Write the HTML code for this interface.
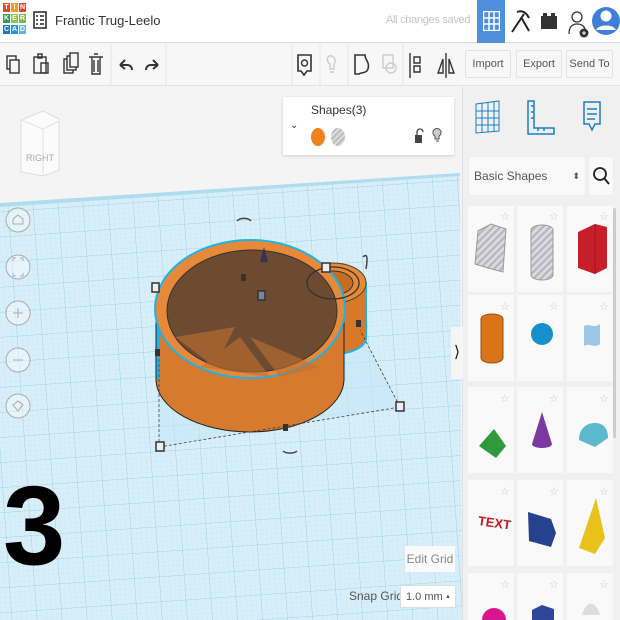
<!DOCTYPE html>
<html><head><meta charset="utf-8"><style>
*{margin:0;padding:0;box-sizing:border-box}
html,body{width:620px;height:620px;overflow:hidden}
body{background:#f4f4f4;font-family:"Liberation Sans",sans-serif;position:relative}
.abs{position:absolute}
.top{left:0;top:0;width:620px;height:43px;background:#fff;border-bottom:1px solid #dcdcdc}
.tb{left:0;top:44px;width:620px;height:42px;background:#f7f7f7;border-bottom:1px solid #e2e2e2}
.btn{position:absolute;top:50px;height:28px;border:1px solid #e3e3e3;background:#f7f7f7;font-size:11px;color:#555;text-align:center;line-height:27px;border-radius:2px}
.logo div{position:absolute;width:7px;height:9px;color:#fff;font-size:7px;font-weight:bold;text-align:center;line-height:9px}
.card{position:absolute;width:46px;height:86px;background:#f9f9f9}
.card.l{height:47px}
</style></head><body>
<div class="abs top"></div>
<div class="abs logo" style="left:3px;top:3px">
<div style="left:0;top:0;background:#e8432c">T</div><div style="left:8px;top:0;background:#f39c1f">I</div><div style="left:16px;top:0;background:#e8432c">N</div>
<div style="left:0;top:11px;background:#2a9e52">K</div><div style="left:8px;top:11px;background:#8cc63f">E</div><div style="left:16px;top:11px;background:#7ab648">R</div>
<div style="left:0;top:22px;background:#1a76c8">C</div><div style="left:8px;top:22px;background:#1a9ad6">A</div><div style="left:16px;top:22px;background:#5bb6e8">D</div>
</div>
<svg class="abs" style="left:33px;top:11px" width="14" height="18"><rect x="1" y="1" width="12" height="16" fill="none" stroke="#222" stroke-width="1.5"/><path d="M3 5h2M3 9h2M3 13h2M7 5h4M7 9h4M7 13h4" stroke="#222" stroke-width="1.5"/></svg>
<div class="abs" style="left:55px;top:13px;font-size:13px;color:#333">Frantic Trug-Leelo</div>
<div class="abs" style="left:386px;top:14px;font-size:11px;color:#c4c4c4;letter-spacing:-0.3px;white-space:nowrap">All changes saved</div>
<div class="abs" style="left:477px;top:0;width:28px;height:43px;background:#4f8fdc"></div>
<svg class="abs" style="left:483px;top:11px" width="17" height="20"><path d="M0.5 0.5h16v19h-16zM0.5 7h16M0.5 13h16M6 0.5v19M11 0.5v19" stroke="#fff" fill="none" stroke-width="1.5"/></svg>
<svg class="abs" style="left:509px;top:8px" width="22" height="26"><path d="M3 24L15 6M8 4c5-2 9 0 12 6M12 9l8 14" stroke="#222" stroke-width="2" fill="none"/></svg>
<svg class="abs" style="left:540px;top:12px" width="18" height="18"><rect x="1" y="4" width="16" height="13" fill="#333"/><rect x="3" y="1" width="4" height="4" fill="#333"/><rect x="11" y="1" width="4" height="4" fill="#333"/></svg>
<svg class="abs" style="left:567px;top:8px" width="24" height="30"><circle cx="10" cy="9" r="5" fill="none" stroke="#333" stroke-width="1.3"/><path d="M2 26c0-7 3-10 8-10s7 2 8 5" fill="none" stroke="#333" stroke-width="1.3"/><circle cx="17" cy="25" r="4.5" fill="#333"/><path d="M17 23v4M15 25h4" stroke="#fff"/></svg>
<svg class="abs" style="left:592px;top:1px" width="28" height="41"><rect width="28" height="41" fill="#fff"/><circle cx="14" cy="20" r="14" fill="#3f7fd8"/><circle cx="14" cy="15" r="5.5" fill="#fff"/><path d="M4 29c3-6 17-6 20 0" fill="#fff"/></svg>
<div class="abs tb"></div>
<svg class="abs" style="left:0;top:44px" width="460" height="42" fill="none" stroke="#333" stroke-width="1.4">
<rect x="7" y="12" width="9" height="13"/><rect x="10" y="16" width="9" height="13" fill="#f7f7f7"/>
<rect x="34" y="13" width="12" height="16"/><rect x="38" y="10" width="4" height="4"/><rect x="41" y="19" width="7" height="10"/>
<rect x="64" y="15" width="9" height="14"/><rect x="67" y="12" width="9" height="14" fill="#f7f7f7"/><rect x="70" y="9" width="8" height="14" fill="#f7f7f7"/>
<path d="M89 13h14M92 13v17h8v-17M94 10h4M94 16v12M98 16v12"/>
<path d="M120 21l5-5M120 21l5 4M120 21h7c3 0 5 2 5 5" stroke-width="2"/>
<path d="M158 21l-5-5M158 21l-5 4M158 21h-7c-3 0-5 2-5 5" stroke-width="2"/>
<path d="M111 0v42M166 0v42M292 0v42M320 0v42M348 0v42M403 0v42" stroke="#e4e4e4" stroke-width="1"/>
<path d="M298 11h13v16h-4l-3 4-3-4h-3z" stroke-width="1.6"/><circle cx="304.5" cy="19" r="3"/>
<path d="M329 12a5 5 0 0 1 5 8v5h-4v-5a5 5 0 0 1-1-8zM330 28h4" stroke="#ccc"/>
<path d="M355 11h10c0 5 5 7 3 14-2 5-7 3-9 5h-4z" stroke-width="1.6"/>
<rect x="383" y="11" width="10" height="13" stroke="#ccc"/><circle cx="391" cy="24" r="5" stroke="#ccc"/>
<path d="M410 9v25M414 13h6v6h-6zM414 22h6v6h-6z"/>
<path d="M446 9v25M443 15l-5 14h5zM449 15l5 14h-5z"/>
</svg>
<div class="btn" style="left:465px;width:46px">Import</div>
<div class="btn" style="left:516px;width:46px">Export</div>
<div class="btn" style="left:566px;width:47px">Send To</div>

<svg class="abs" style="left:0;top:87px" width="462" height="533">
<defs>
<pattern id="g" width="5" height="5" patternUnits="userSpaceOnUse" patternTransform="rotate(-4)"><path d="M5 0V5H0" fill="none" stroke="#bfe1f1" stroke-width="0.5"/></pattern>
<pattern id="G" width="25" height="25" patternUnits="userSpaceOnUse" patternTransform="rotate(-4)"><path d="M25 0V25H0" fill="none" stroke="#95cce8" stroke-width="0.8"/></pattern>
</defs>
<polygon points="0,116 460,86 462,533 0,533" fill="#d8eff9"/>
<polygon points="0,116 460,86 462,533 0,533" fill="url(#g)"/>
<polygon points="0,116 460,86 462,533 0,533" fill="url(#G)"/>
<polygon points="0,116 460,86 460,89 0,120" fill="#b0dcf0"/>
<polygon points="159,360 400,320 360,243 157,263" fill="#c5e6f6" opacity="0.6"/>
<path d="M300 196 h66 v55 a33 16 0 0 1 -66 0z" fill="#d8782a" stroke="#1ab4e8" stroke-width="2"/>
<ellipse cx="333" cy="196" rx="33" ry="20" fill="#e88a35" stroke="#444"/>
<ellipse cx="333" cy="196" rx="20" ry="12" fill="#c46e25" stroke="#333"/>
<path d="M156 222 v70 a94 53 0 0 0 188 0 v-70z" fill="#d57a2e" stroke="#222" stroke-width="1"/>
<path d="M158 222 v70" stroke="#1ab4e8" stroke-width="3"/>
<ellipse cx="250" cy="222" rx="95" ry="69" fill="#e8893a" stroke="#1ab4e8" stroke-width="2"/>
<ellipse cx="252" cy="224" rx="85" ry="61" fill="#6d4b30" stroke="#333"/>
<path d="M175 250 l60 -10 l-20 40z M200 280 l40 -30 l30 40z M280 290 l-30 -40 l70 30z" fill="#c27030" opacity="0.6"/>
<ellipse cx="333" cy="196" rx="26" ry="16" fill="none" stroke="#333" stroke-width="1.3"/>
<g fill="none" stroke="#444" stroke-width="0.8" stroke-dasharray="3 2"><path d="M159 360 L400 320 L360 243 M159 360 V263"/></g>
<g fill="#eee" stroke="#333" stroke-width="1.5"><rect x="152" y="196" width="7" height="9"/><rect x="322" y="176" width="8" height="9"/><rect x="156" y="355" width="8" height="9"/><rect x="396" y="315" width="8" height="9"/><rect x="258" y="204" width="7" height="9" fill="#789"/></g>
<g fill="#333"><rect x="155" y="262" width="5" height="7"/><rect x="283" y="337" width="5" height="7"/><rect x="356" y="233" width="5" height="7"/><rect x="241" y="187" width="5" height="7"/></g>
<path d="M237 134a8 5 0 0 1 14 0M283 364a8 4 0 0 0 14 0M363 170q6 -6 3 12" fill="none" stroke="#444" stroke-width="1.5"/>
<path d="M260 175 l4 -15 l4 15z" fill="#335"/>
</svg>
<svg class="abs" style="left:18px;top:105px" width="44" height="80"><path d="M3 15l22-9 16 8v51l-16 6-22-4z" fill="#fbfbfb" stroke="#ddd"/><path d="M3 15l22 9 16-8M25 24v47" stroke="#e2e2e2" fill="none"/><text x="8" y="56" font-size="9" fill="#aaa" font-family="Liberation Sans">RIGHT</text></svg>
<svg class="abs" style="left:4px;top:205px" width="30" height="220" fill="rgba(255,255,255,.4)" stroke="#aaa">
<circle cx="14" cy="15" r="12"/><circle cx="14" cy="62" r="12"/><circle cx="14" cy="108" r="12"/><circle cx="14" cy="155" r="12"/><circle cx="14" cy="201" r="12"/>
<path d="M9 19v-5l5-4 5 4v5z M9 56v-3h3M19 56v-3h-3M9 68v3h3M19 68v3h-3M9 108h10M14 103v10M9 155h10M14 196l5 4-5 6-5-6z" fill="none"/>
</svg>
<div class="abs" style="left:3px;top:470px;height:110px;font-size:112px;font-weight:bold;color:#000;line-height:1">3</div>
<div class="abs" style="left:405px;top:546px;width:50px;height:26px;background:#fafafa;font-size:12px;color:#888;line-height:26px;text-align:center;white-space:nowrap">Edit Grid</div>
<div class="abs" style="left:349px;top:589px;font-size:12px;color:#555;white-space:nowrap">Snap Grid</div>
<div class="abs" style="left:400px;top:585px;width:56px;height:23px;background:#fff;border:1px solid #ddd;font-size:11px;color:#555;line-height:22px;padding-left:5px;white-space:nowrap">1.0 mm<span style="position:absolute;right:4px;font-size:6px">▲</span></div>

<div class="abs" style="left:283px;top:97px;width:171px;height:58px;background:#fff;box-shadow:0 1px 3px rgba(0,0,0,.15)"></div>
<div class="abs" style="left:311px;top:103px;font-size:12px;color:#333">Shapes(3)</div>
<div class="abs" style="left:290px;top:120px;font-size:10px;color:#333">⌄</div>
<div class="abs" style="left:311px;top:128px;width:14px;height:18px;border-radius:50%;background:#f0821e"></div>
<svg class="abs" style="left:330px;top:128px" width="16" height="18"><defs><pattern id="s" width="4" height="4" patternUnits="userSpaceOnUse" patternTransform="rotate(45)"><rect width="2" height="4" fill="#bbb"/><rect x="2" width="2" height="4" fill="#ddd"/></pattern></defs><ellipse cx="8" cy="9" rx="7" ry="9" fill="url(#s)"/></svg>
<svg class="abs" style="left:414px;top:126px" width="30" height="20"><path d="M3 9v-3a3 3 0 0 1 6 0" fill="none" stroke="#444" stroke-width="1.3"/><rect x="1" y="9" width="7" height="8" fill="#444"/><path d="M21 3a4 4 0 0 1 4 7v3h-4v-3a4 4 0 0 1 0-7zM22 15h3" fill="#ccc" stroke="#555"/></svg>

<div class="abs" style="left:462px;top:87px;width:158px;height:533px;background:#f0f0f0;border-left:1px solid #e0e0e0"></div>
<div class="abs" style="left:451px;top:327px;width:12px;height:52px;background:#f5f5f5;font-size:16px;line-height:52px;color:#222;text-align:center">⟩</div>
<svg class="abs" style="left:470px;top:96px" width="140" height="45" fill="none" stroke="#1a7fc8" stroke-width="1.5">
<path d="M6 8l23-3v30l-23 2z M6 15h23M6 22h23M6 29h23M12 7v29M18 6v30M24 6v29" stroke-width="1"/>
<path d="M58 5h6v27h20v6h-26z"/><path d="M61 10h3M61 16h3M61 22h3M68 32v3M74 32v3"/>
<path d="M114 6h16v22h-5l-3 6-3-6h-5z"/><path d="M117 13h10M117 18h10M117 23h8"/>
</svg>
<div class="abs" style="left:468px;top:156px;width:118px;height:40px;background:#f9f9f9;border:1px solid #eee;font-size:12px;color:#555;line-height:38px;padding-left:5px">Basic Shapes<span style="position:absolute;right:5px;font-size:9px">⬍</span></div>
<div class="abs" style="left:588px;top:156px;width:26px;height:40px;background:#f9f9f9;border:1px solid #eee"></div>
<svg class="abs" style="left:592px;top:166px" width="18" height="20"><circle cx="8" cy="8" r="6" fill="none" stroke="#222" stroke-width="1.8"/><path d="M12 12l5 6" stroke="#222" stroke-width="2"/></svg>

<div class="card" style="left:468px;top:206px"></div><div class="card" style="left:517px;top:206px"></div><div class="card" style="left:567px;top:206px"></div>
<div class="card" style="left:468px;top:295px"></div><div class="card" style="left:517px;top:295px"></div><div class="card" style="left:567px;top:295px"></div>
<div class="card" style="left:468px;top:387px"></div><div class="card" style="left:517px;top:387px"></div><div class="card" style="left:567px;top:387px"></div>
<div class="card" style="left:468px;top:480px"></div><div class="card" style="left:517px;top:480px"></div><div class="card" style="left:567px;top:480px"></div>
<div class="card l" style="left:468px;top:573px"></div><div class="card l" style="left:517px;top:573px"></div><div class="card l" style="left:567px;top:573px"></div>
<div class="abs" style="left:613px;top:208px;width:3px;height:230px;background:#ccc;border-radius:2px"></div>
<svg class="abs" style="left:462px;top:200px" width="158" height="420">
<defs><pattern id="h" width="5" height="5" patternUnits="userSpaceOnUse" patternTransform="rotate(45)"><rect width="2.5" height="5" fill="#b8b8c0"/><rect x="2.5" width="2.5" height="5" fill="#dcdce2"/></pattern></defs>
<g font-size="11" fill="#ccc"><text x="38" y="20">☆</text><text x="87" y="20">☆</text><text x="137" y="20">☆</text><text x="38" y="110">☆</text><text x="87" y="110">☆</text><text x="137" y="110">☆</text><text x="38" y="202">☆</text><text x="87" y="202">☆</text><text x="137" y="202">☆</text><text x="38" y="295">☆</text><text x="87" y="295">☆</text><text x="137" y="295">☆</text><text x="38" y="388">☆</text><text x="87" y="388">☆</text><text x="137" y="388">☆</text></g>
<path d="M16 31l13-7 15 5-3 43-15-4-13-4z" fill="url(#h)" stroke="#999"/>
<path d="M69 30a11 5 0 0 1 22 0v45a11 5 0 0 1-22 0z" fill="url(#h)" stroke="#999"/>
<path d="M116 32l17-8 12 3v41l-12 6-17-6z" fill="#c81e2a"/><path d="M133 24v50" stroke="#9a1420"/>
<path d="M19 119a11 5 0 0 1 22 0v39a11 5 0 0 1-22 0z" fill="#db7419" stroke="#9a4f10"/>
<circle cx="80" cy="134" r="11" fill="#1590cc"/>
<path d="M122 126c6-3 10 3 16-2v20c-6 5-10-2-16 2z" fill="#9ec4e8"/>
<path d="M17 246l15-17 12 17-10 12z" fill="#2f9a3a"/>
<path d="M80 212l-10 32a10 4 0 0 0 20 0z" fill="#7a3aa0"/>
<path d="M117 240c0-12 8-17 16-17s13 5 13 15l-13 9z" fill="#5ab9cc"/>
<text x="16" y="327" font-size="13" font-weight="bold" fill="#c01a22" transform="rotate(8 30 322)">TEXT</text>
<path d="M66 312l23 7 5 14-5 14-22-6z" fill="#26418e"/>
<path d="M134 298l-17 50 16 6 10-16z" fill="#e8c21a"/>
<circle cx="32" cy="420" r="12" fill="#d8158e"/><path d="M70 410l10-5 12 4v20h-22z" fill="#2f4597"/><path d="M120 415c4-15 14-15 18 0z" fill="#ddd"/>
</svg>
</body></html>
